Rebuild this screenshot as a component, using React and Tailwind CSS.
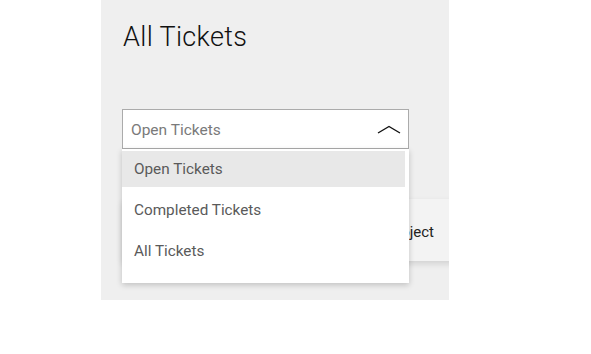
import React from "react"

const font = { fontFamily: "Roboto, 'Liberation Sans', sans-serif" }

function ChevronUp() {
  return (
    <svg width="24" height="9" viewBox="0 0 24 9" fill="none">
      <path d="M1 8 L12 1.5 L23 8" stroke="#111" strokeWidth="1.4" />
    </svg>
  )
}

export default function App() {
  const options = ["Open Tickets", "Completed Tickets", "All Tickets"]
  return (
    <div className="w-[591px] h-[354px] bg-white" style={font}>
      <div className="ml-[101px] w-[348px] h-[300px] bg-[#efefef] overflow-hidden relative">
        <div className="pl-[21px] pt-[21px]">
          <h1 className="pl-[1px] text-[27px] leading-[32px] text-[#111] font-light tracking-[0.35px]">All Tickets</h1>
          <div className="relative mt-[56px] w-[287px]">
            <div className="h-[40px] border border-[#ababab] bg-white flex items-center justify-between pl-[8px] pr-[7px]">
              <span className="pt-[3px] text-[15.5px] text-[#7a7a7a]">Open Tickets</span>
              <ChevronUp />
            </div>
            <div className="absolute left-0 top-[40px] w-[287px] h-[134px] bg-white shadow-[0_2px_6px_rgba(0,0,0,0.2)] z-10 pt-[2px]">
              {options.map((o, i) => (
                <div
                  key={o}
                  className={`flex items-center pl-[12px] text-[15.3px] text-[#5a5a5a] mr-[4px] ${i === 0 ? "h-[36px] bg-[#e8e8e8]" : "h-[40px]"} ${i === 1 ? "mt-[3px]" : ""} ${i === 2 ? "pt-[2px]" : ""}`}
                >
                  {o}
                </div>
              ))}
            </div>
          </div>
          <div className="mt-[50px] w-[340px] h-[62px] bg-[#f3f3f3] shadow-[0_3px_6px_rgba(0,0,0,0.12)] flex items-center justify-end pr-[28px] pt-[4px]">
            <span className="text-[15px] text-[#222]">New Project</span>
          </div>
        </div>
      </div>
    </div>
  )
}
